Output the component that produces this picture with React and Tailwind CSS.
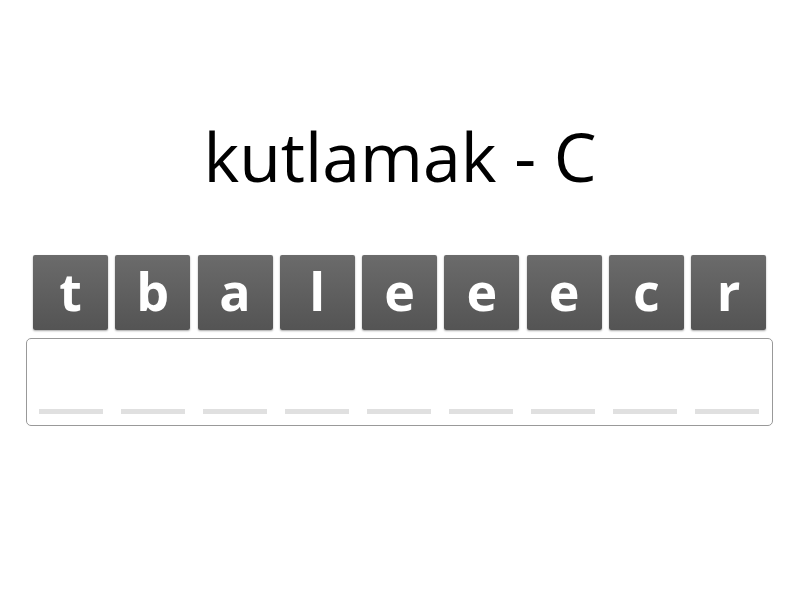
const letters = ['t', 'b', 'a', 'l', 'e', 'e', 'e', 'c', 'r']

export default function App() {
  return (
    <div className="w-[800px] h-[600px] bg-white font-['Open_Sans',sans-serif] relative overflow-hidden">
      <div className="pt-[109px] h-[240px] text-center">
        <h1 className="text-[68px] leading-[94px] text-black">kutlamak - C</h1>
      </div>

      <div className="pl-[33px] pt-[15px] flex gap-[7.25px]">
        {letters.map((l, i) => (
          <div
            key={i}
            className="w-[75px] h-[75px] rounded-[2px] bg-gradient-to-b from-[#6b6b6b] to-[#545454] shadow-[0_1px_2px_rgba(0,0,0,0.35)] flex items-center justify-center text-white font-bold text-[52px] leading-none pb-[4px]"
          >
            {l}
          </div>
        ))}
      </div>

      <div className="ml-[26px] mt-[8px] w-[747px] h-[88px] border border-[#999] rounded-[5px] flex items-end gap-[18px] pl-[12px] pb-[11px]">
        {letters.map((_, i) => (
          <div key={i} className="w-[64px] h-[5px] bg-[#e0e0e0]" />
        ))}
      </div>
    </div>
  )
}
